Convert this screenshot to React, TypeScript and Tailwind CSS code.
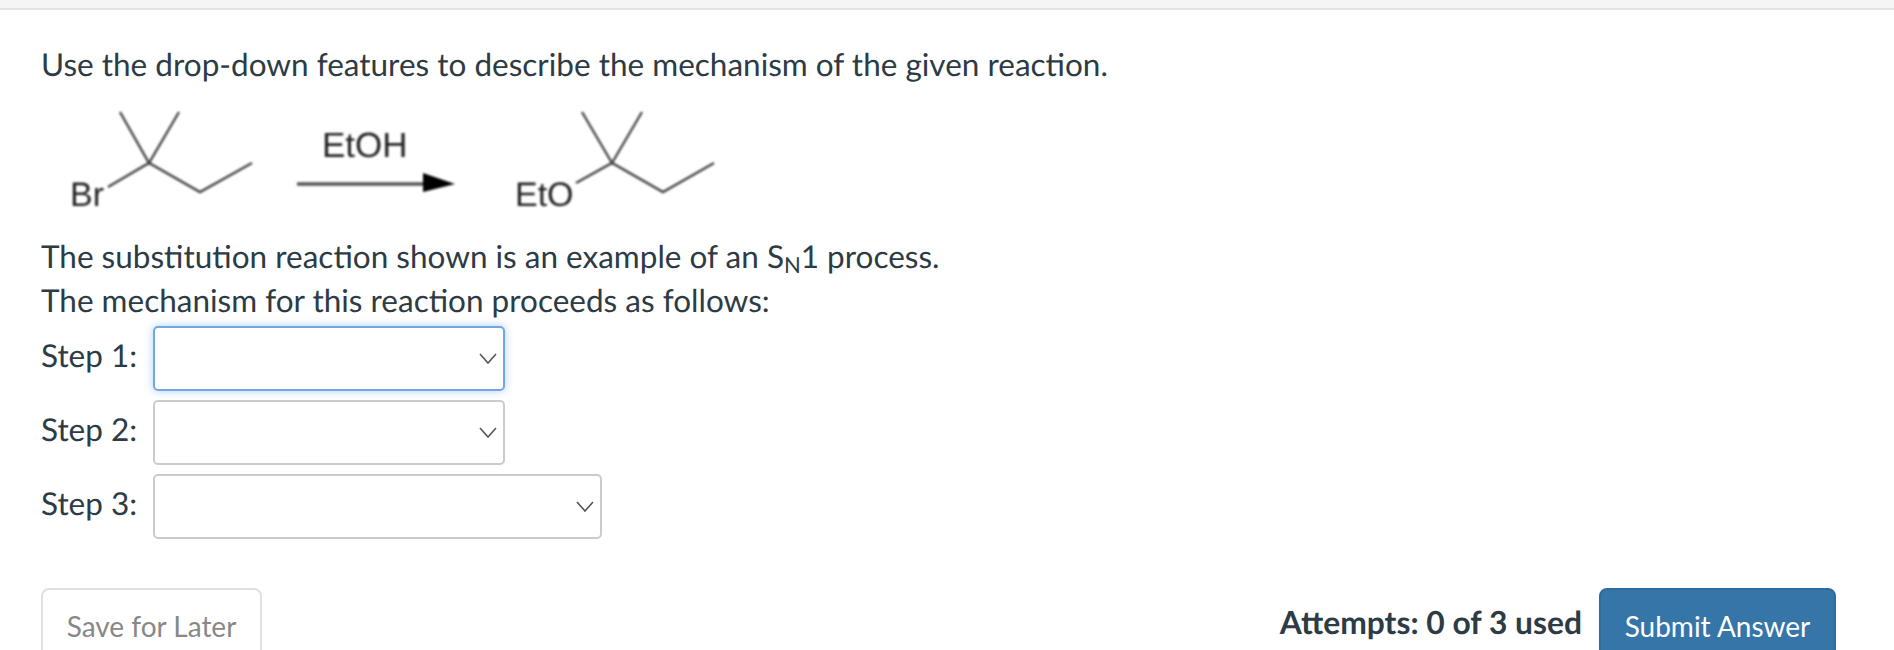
import { FC } from 'react';

const steps = [
  { label: 'Step 1:', width: 'w-[352px]', focused: true },
  { label: 'Step 2:', width: 'w-[352px]', focused: false },
  { label: 'Step 3:', width: 'w-[449px]', focused: false },
];

const Reaction: FC = () => (
  <svg width="700" height="120" viewBox="41 100 700 120" className="block blur-[0.8px]">
    <g fill="none" stroke="#444" strokeWidth="2.4">
      <path d="M120 112 L149 163 L179 112 M108 187 L149 163 L200 192 L252 163" />
      <path d="M582 112 L612 163 L642 112 M576 183 L612 163 L663 192 L714 163" />
    </g>
    <path d="M297 184 H425" stroke="#555" strokeWidth="3.5" />
    <path d="M423 173 L455 184 L423 192 Z" fill="#000" />
    <g fontFamily="'Liberation Sans', Arial, sans-serif" fill="#222">
      <text x="70" y="206" fontSize="34">Br</text>
      <text x="322" y="157" fontSize="35">EtOH</text>
      <text x="515" y="206" fontSize="34">EtO</text>
    </g>
  </svg>
);

const StepSelect: FC<{ label: string; width: string; focused: boolean }> = ({
  label,
  width,
  focused,
}) => (
  <div className="flex items-center">
    <span className="w-[112px] pb-2">{label}</span>
    <div className={`relative h-[65px] ${width}`}>
      <select
        className={`h-full w-full appearance-none rounded-[5px] border-2 bg-white ${
          focused
            ? 'border-[#71a7e4] shadow-[0_0_8px_rgba(82,150,230,0.45)]'
            : 'border-[#cbcbcb]'
        }`}
      />
      <svg
        width="18"
        height="11"
        viewBox="0 0 18 11"
        className="pointer-events-none absolute right-[8px] top-[27px]"
      >
        <path d="M1 1 L9 10 L17 1" fill="none" stroke="#555" strokeWidth="1.6" />
      </svg>
    </div>
  </div>
);

const App: FC = () => {
  return (
    <div className="h-[650px] w-[1894px] overflow-hidden bg-white font-['Lato',sans-serif] text-[31.5px] leading-[44px] text-[#2d3b45] [text-rendering:geometricPrecision]">
      <div className="h-[10px] border-b-2 border-[#e3e3e3] bg-[#f5f5f5]" />
      <div className="px-[41px] pt-[32px]">
        <p>Use the drop-down features to describe the mechanism of the given reaction.</p>
        <div className="mt-[14px]">
          <Reaction />
        </div>
        <p className="mt-[14px]">
          The substitution reaction shown is an example of an S
          <span className="align-[-5px] text-[22px] leading-none">N</span>1 process.
        </p>
        <p>The mechanism for this reaction proceeds as follows:</p>
        <div className="mt-[4px] flex flex-col gap-[9px]">
          {steps.map((step) => (
            <StepSelect key={step.label} {...step} />
          ))}
        </div>
        <div className="mt-[49px] flex items-start justify-between pr-[17px]">
          <button className="h-[80px] w-[221px] rounded-[8px] border-2 border-[#e0e0e0] bg-white pb-[4px] text-[28px] text-[#888]">
            Save for Later
          </button>
          <div className="flex items-start">
            <span className="mr-[17px] mt-[12px] text-[31.8px] font-bold">Attempts: 0 of 3 used</span>
            <button className="h-[80px] w-[237px] rounded-[8px] border-2 border-[#2f6c9e] bg-[#3575a8] pb-[4px] text-[28px] text-white">
              Submit Answer
            </button>
          </div>
        </div>
      </div>
    </div>
  );
};

export default App;
